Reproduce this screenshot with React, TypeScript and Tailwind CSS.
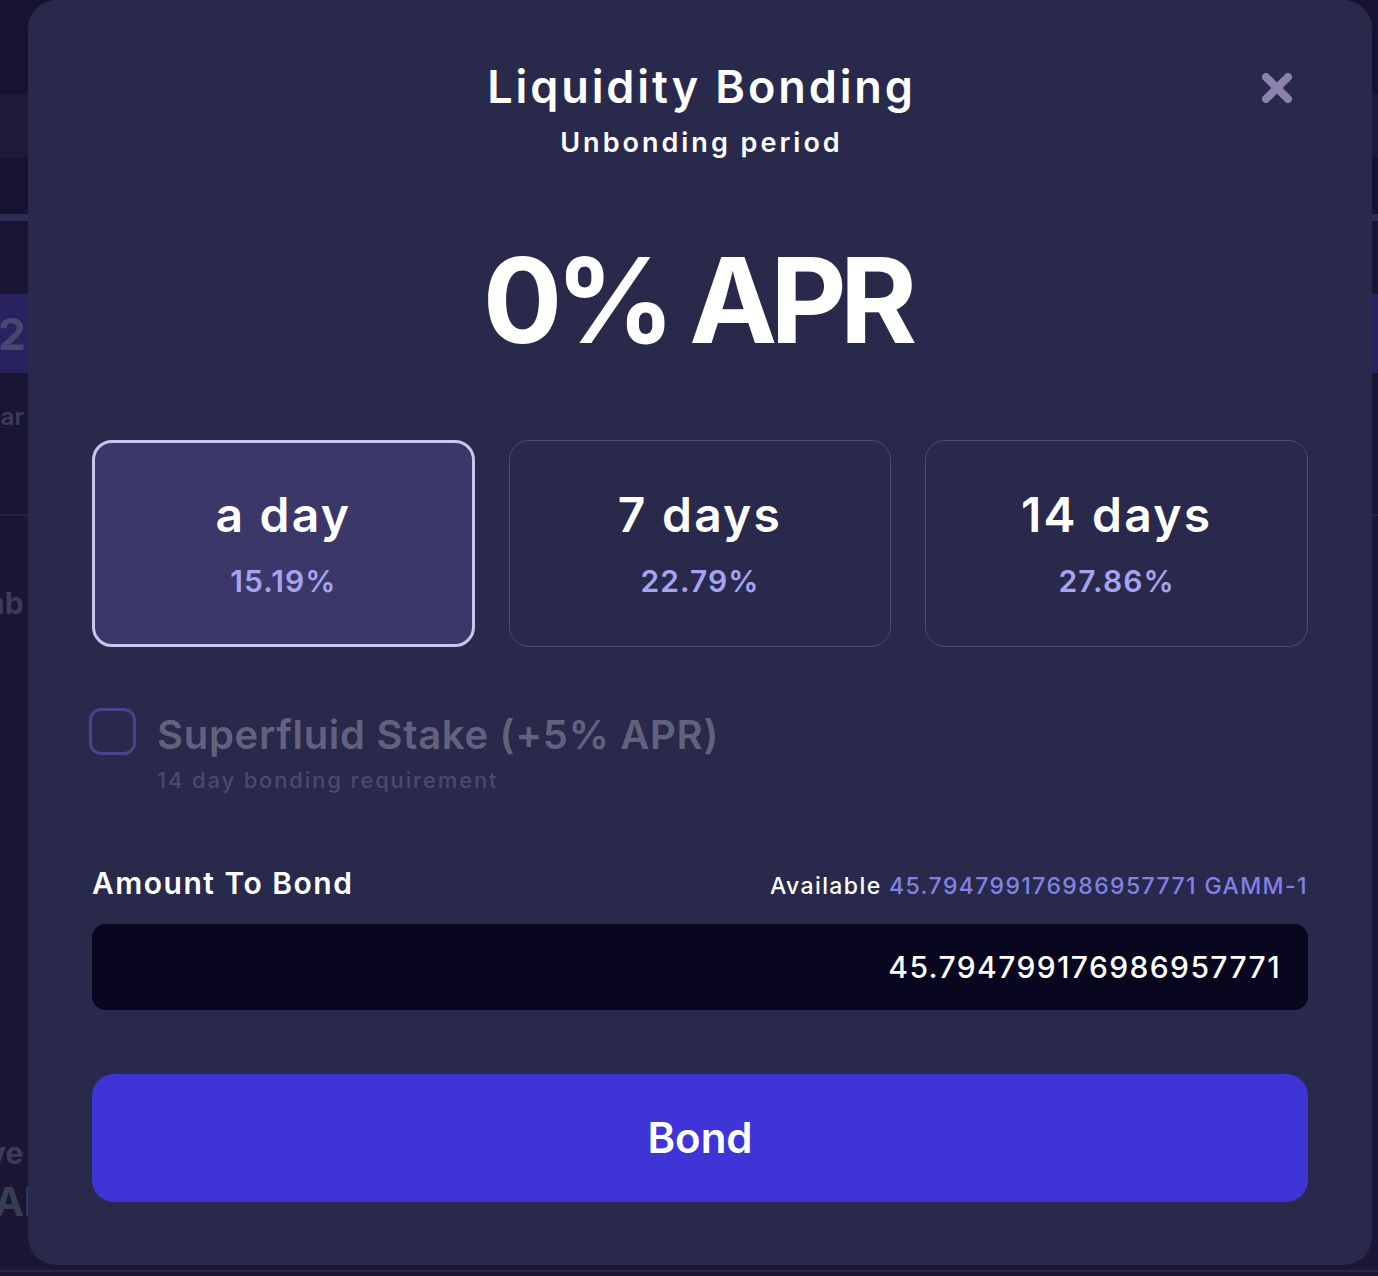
const periods = [
  { label: "a day", apr: "15.19%", selected: true },
  { label: "7 days", apr: "22.79%", selected: false },
  { label: "14 days", apr: "27.86%", selected: false },
];

function Backdrop() {
  // page content dimmed behind the modal
  return (
    <div className="flex flex-col w-full h-full">
      <div className="h-[94px] bg-[#181231]" />
      <div className="h-[64px] bg-[#1d1937]" />
      <div className="h-[56px] bg-[#181231]" />
      <div className="h-[7px] bg-[#2c2d52]" />
      <div className="h-[73px] bg-[#191433]" />
      <div className="h-[79px] bg-[#28235e] flex items-center">
        <span className="text-[44px] font-bold text-[#4a4670] leading-none -ml-[2px]">2</span>
      </div>
      <div className="h-[141px] bg-[#1a1533] pt-[32px]">
        <span className="text-[24px] font-semibold text-[#3d3a5c] leading-none -ml-[14px]">nar</span>
      </div>
      <div className="h-[2px] bg-[#24213f]" />
      <div className="flex-1 bg-[#1a1633] flex flex-col">
        <div className="pt-[72px] text-[30px] font-bold text-[#3d3a5c] leading-none -ml-[14px]">nb</div>
        <div className="mt-[520px] text-[30px] font-bold text-[#3d3a5c] leading-none -ml-[12px]">ve</div>
        <div className="mt-[14px] text-[40px] font-bold text-[#363f52] leading-none -ml-[6px]">Al</div>
      </div>
      <div className="h-[5px] bg-[#1a1633]" />
      <div className="h-[2px] bg-[#262344]" />
      <div className="h-[4px] bg-[#1a1633]" />
    </div>
  );
}

export default function App() {
  return (
    <div
      className="relative w-[1378px] h-[1276px] overflow-hidden bg-[#1a1633]"
      style={{ fontFamily: "Inter, 'Liberation Sans', sans-serif" }}
    >
      <Backdrop />

      {/* Modal */}
      <div className="absolute left-[28px] top-0 w-[1344px] h-[1265px] rounded-[28px] bg-[#29294b] px-[64px] flex flex-col">
        <button className="absolute right-[80px] top-[73px]">
          <svg width="30" height="30" viewBox="0 0 30 30" fill="none">
            <path d="M4 4L26 26M26 4L4 26" stroke="#8b82ad" strokeWidth="8" strokeLinecap="round" />
          </svg>
        </button>

        <div className="pt-[65px] flex flex-col items-center text-white">
          <h1 className="text-[45px] leading-[44px] font-semibold tracking-[2.9px] ml-[3px]">Liquidity Bonding</h1>
          <p className="mt-[21px] text-[27px] leading-[26px] font-semibold tracking-[3px] ml-[3px]">Unbonding period</p>
          <h2 className="mt-[82px] text-[118px] leading-[124px] font-bold tracking-[-7px] mr-[-7px] pr-[14px]">0% APR</h2>
        </div>

        <div className="mt-[78px] grid grid-cols-3 gap-[34px]">
          {periods.map((p) => (
            <div
              key={p.label}
              className={
                p.selected
                  ? "h-[207px] rounded-[20px] border-[3px] border-[#cbc4ef] bg-[#3b3768] flex flex-col items-center justify-center"
                  : "h-[207px] rounded-[20px] border border-[#4d4a78] flex flex-col items-center justify-center"
              }
            >
              <div className="text-[48px] leading-[48px] font-semibold text-white tracking-[2.2px]">{p.label}</div>
              <div className="mt-[27px] text-[30px] leading-[30px] font-semibold text-[#a7a4ef] tracking-[1.1px]">{p.apr}</div>
            </div>
          ))}
        </div>

        <div className="mt-[61px] flex items-start gap-[21px] -ml-[3px]">
          <div className="w-[47px] h-[47px] rounded-[12px] border-[3px] border-[#45458a] shrink-0" />
          <div className="pt-[7px]">
            <div className="text-[40px] leading-[40px] font-semibold text-[#62627f] tracking-[0.7px]">Superfluid Stake (+5% APR)</div>
            <div className="mt-[14px] text-[22px] leading-[22px] font-medium text-[#4a4a6e] tracking-[1.85px]">
              14 day bonding requirement
            </div>
          </div>
        </div>

        <div className="mt-[77px] flex items-baseline justify-between">
          <span className="text-[30px] leading-[30px] font-semibold text-white tracking-[1.5px]">Amount To Bond</span>
          <span className="text-[23px] leading-[22px] font-medium text-white tracking-[1.4px]">
            Available <span className="text-[#8281e6]">45.794799176986957771 GAMM-1</span>
          </span>
        </div>

        <div className="mt-[26px] h-[86px] rounded-[14px] bg-[#090620] flex items-center justify-end pr-[27px]">
          <span className="text-[30px] leading-[30px] font-medium text-white tracking-[1.4px]">45.794799176986957771</span>
        </div>

        <button className="mt-[64px] h-[128px] rounded-[22px] bg-[#3f35d6] flex items-center justify-center">
          <span className="text-[42px] leading-[42px] font-semibold text-white">Bond</span>
        </button>
      </div>
    </div>
  );
}
